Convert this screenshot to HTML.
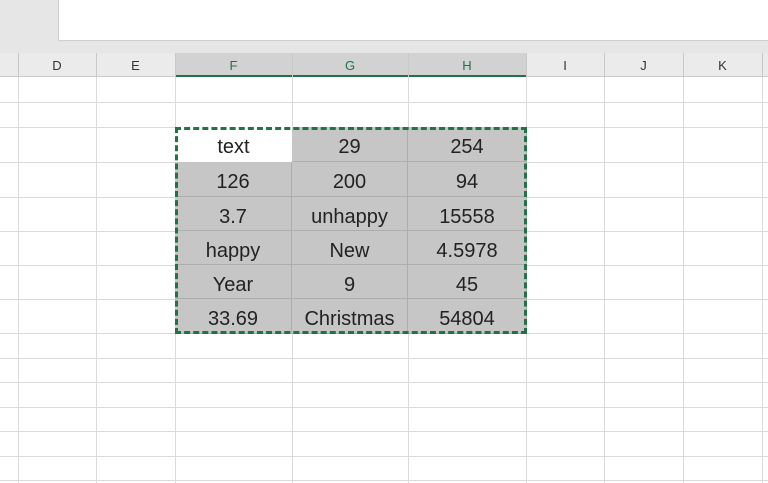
<!DOCTYPE html>
<html><head><style>
body{margin:0;width:768px;height:483px;overflow:hidden;background:#fff;position:relative;font-family:"Liberation Sans",sans-serif}
div{position:absolute;box-sizing:border-box}
.v{width:1px;background:#dadada;top:77px;height:406px}
.h{height:1px;background:#dadada;left:0;width:768px}
.hv{width:1px;background:#c8c8c8;top:53px;height:24px}
.ch{top:53px;height:24px;line-height:26px;text-align:center;font-size:13px;color:#333}
.c{height:35px;line-height:40px;text-align:center;font-size:20px;color:#222;background:#c6c6c6;border-right:1px solid #adadad;border-bottom:1px solid #adadad}
</style></head><body>
<div style="left:0;top:0;width:768px;height:53px;background:#e6e6e6"></div>
<div style="left:58px;top:0;width:710px;height:41px;background:#fff;border-left:1px solid #cfcfcf;border-bottom:1px solid #cfcfcf"></div>
<div style="left:0;top:53px;width:768px;height:24px;background:#ebebeb;border-bottom:1px solid #c8c8c8"></div>
<div style="left:175px;top:53px;width:351px;height:24px;background:#d2d2d2;border-bottom:2px solid #217346"></div>
<div class="hv" style="left:18px"></div><div class="hv" style="left:96px"></div><div class="hv" style="left:175px"></div><div class="hv" style="left:292px"></div><div class="hv" style="left:408px"></div><div class="hv" style="left:526px"></div><div class="hv" style="left:604px"></div><div class="hv" style="left:683px"></div><div class="hv" style="left:762px"></div>
<div class="ch" style="left:18px;width:78px">D</div>
<div class="ch" style="left:96px;width:79px">E</div>
<div class="ch" style="left:175px;width:117px;color:#217346">F</div>
<div class="ch" style="left:292px;width:116px;color:#217346">G</div>
<div class="ch" style="left:408px;width:118px;color:#217346">H</div>
<div class="ch" style="left:526px;width:78px">I</div>
<div class="ch" style="left:604px;width:79px">J</div>
<div class="ch" style="left:683px;width:79px">K</div>
<div class="v" style="left:18px"></div><div class="v" style="left:96px"></div><div class="v" style="left:175px"></div><div class="v" style="left:292px"></div><div class="v" style="left:408px"></div><div class="v" style="left:526px"></div><div class="v" style="left:604px"></div><div class="v" style="left:683px"></div><div class="v" style="left:762px"></div>
<div class="h" style="top:102px"></div><div class="h" style="top:127px"></div><div class="h" style="top:162px"></div><div class="h" style="top:197px"></div><div class="h" style="top:231px"></div><div class="h" style="top:265px"></div><div class="h" style="top:299px"></div><div class="h" style="top:333px"></div><div class="h" style="top:358px"></div><div class="h" style="top:382px"></div><div class="h" style="top:407px"></div><div class="h" style="top:431px"></div><div class="h" style="top:456px"></div><div class="h" style="top:480px"></div>
<div style="left:175px;top:127px;width:352px;height:207px;background:#c6c6c6">
<div class="c" style="left:0;top:0;width:117px;background:#fff;border:none">text</div>
<div class="c" style="left:117px;top:0;width:116px">29</div>
<div class="c" style="left:233px;top:0;width:119px">254</div>
<div class="c" style="left:0;top:35px;width:117px">126</div>
<div class="c" style="left:117px;top:35px;width:116px">200</div>
<div class="c" style="left:233px;top:35px;width:119px">94</div>
<div class="c" style="left:0;top:70px;width:117px;height:34px">3.7</div>
<div class="c" style="left:117px;top:70px;width:116px;height:34px">unhappy</div>
<div class="c" style="left:233px;top:70px;width:119px;height:34px">15558</div>
<div class="c" style="left:0;top:104px;width:117px;height:34px">happy</div>
<div class="c" style="left:117px;top:104px;width:116px;height:34px">New</div>
<div class="c" style="left:233px;top:104px;width:119px;height:34px">4.5978</div>
<div class="c" style="left:0;top:138px;width:117px;height:34px">Year</div>
<div class="c" style="left:117px;top:138px;width:116px;height:34px">9</div>
<div class="c" style="left:233px;top:138px;width:119px;height:34px">45</div>
<div class="c" style="left:0;top:172px;width:117px">33.69</div>
<div class="c" style="left:117px;top:172px;width:116px">Christmas</div>
<div class="c" style="left:233px;top:172px;width:119px">54804</div>
<div style="left:0;top:0;width:352px;height:207px;border:3px dashed #217346"></div>
</div>
</body></html>
